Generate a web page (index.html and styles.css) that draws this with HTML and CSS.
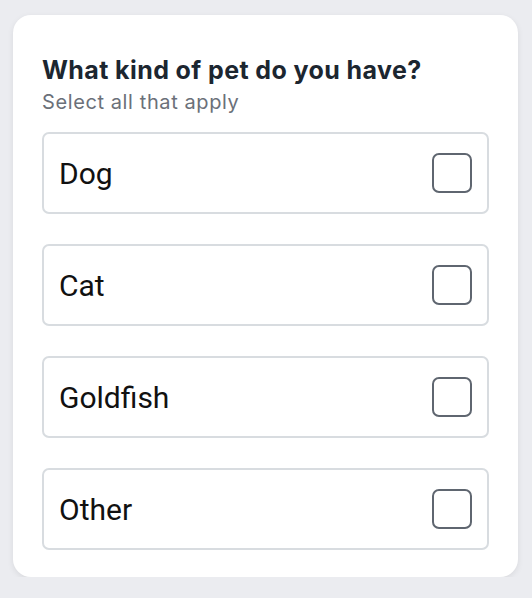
FILE: index.html
```html
<!DOCTYPE html>
<html lang="en">
<head>
    <meta charset="UTF-8">
    <meta name="viewport" content="width=device-width, initial-scale=1.0">
    <title>Pet survey</title>
    <link rel="stylesheet" href="styles.css">
</head>
<body>
    <div class="card">
        <h1>What kind of pet do you have?</h1>
        <p class="hint">Select all that apply</p>
        <div class="options">
            <label class="option">
                <span>Dog</span>
                <input type="checkbox">
            </label>
            <label class="option">
                <span>Cat</span>
                <input type="checkbox">
            </label>
            <label class="option">
                <span>Goldfish</span>
                <input type="checkbox">
            </label>
            <label class="option">
                <span>Other</span>
                <input type="checkbox">
            </label>
        </div>
    </div>
</body>
</html>
```

FILE: styles.css
```css
body{
    margin: 0;
    padding: 15px 14px 0 13px;
    background-color: #ebecf0;
    font-family: "Inter", "Liberation Sans", sans-serif;
}
.card{
    background-color: #fff;
    border-radius: 18px;
    box-shadow: 0 2px 6px rgba(0, 0, 0, 0.08);
    padding: 39px 29px 27px 29px;
}
.card>h1{
    margin: 0;
    font-size: 25px;
    line-height: 32px;
    font-weight: 700;
    color: #1c2630;
    letter-spacing: 0.4px;
}
.card>.hint{
    margin: 4px 0 0 0;
    font-size: 20px;
    line-height: 24px;
    color: #6b7079;
    letter-spacing: 0.6px;
}
.options{
    display: flex;
    flex-direction: column;
    gap: 30px;
    margin-top: 18px;
}
.option{
    display: flex;
    align-items: center;
    justify-content: space-between;
    height: 82px;
    box-sizing: border-box;
    border: 2px solid #d8dce0;
    border-radius: 7px;
    padding: 0 15px 0 15px;
    font-family: "Roboto", sans-serif;
    font-size: 30px;
    color: #111;
}
.option>input{
    appearance: none;
    margin: 0;
    width: 40px;
    height: 40px;
    border: 2.5px solid #5f6670;
    border-radius: 7px;
    background: #fff;
}
```
